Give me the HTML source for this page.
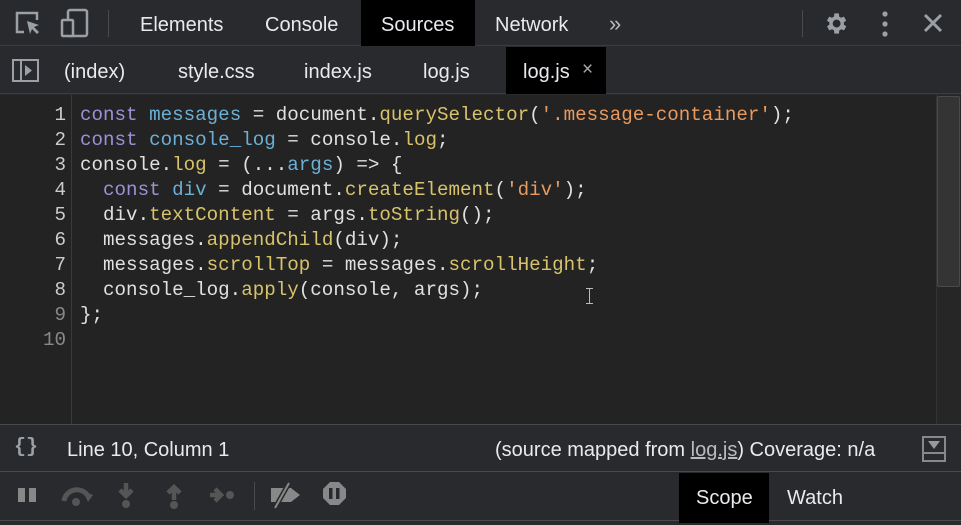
<!DOCTYPE html>
<html><head><style>
*{margin:0;padding:0;box-sizing:border-box}
body{width:961px;height:525px;background:#292a2d;font-family:"Liberation Sans",sans-serif;color:#e8eaed;position:relative;overflow:hidden}
.abs{position:absolute}
.t{position:absolute;font-size:20px;top:14px;color:#e8eaed}
.f{position:absolute;font-size:20px;top:61px;color:#e8eaed}
.code{position:absolute;left:80px;top:103px;font-family:"Liberation Mono",monospace;font-size:19.2px;line-height:25px;color:#e0e0e0;white-space:pre}
.ln{position:absolute;left:0;width:66px;top:103px;font-family:"Liberation Mono",monospace;font-size:19.2px;line-height:25px;color:#ccc;text-align:right;white-space:pre}
.k{color:#9f8fd8}.v{color:#6bb0d6}.m{color:#d8c26a}.s{color:#e89a5f}
</style></head><body>
<div class="abs" style="left:0;top:0;width:961px;height:46px;background:#292a2d;border-bottom:1px solid #3c3d40"></div>
<svg class="abs" style="left:14px;top:10px" width="30" height="28" viewBox="0 0 30 28"><path d="M10 22H3V3h20v7" fill="none" stroke="#9aa0a6" stroke-width="2.5"/><path d="M13 11l12 4-5 2 5 5-2 2-5-5-2 5z" fill="#9aa0a6"/></svg>
<svg class="abs" style="left:60px;top:8px" width="30" height="30" viewBox="0 0 30 30"><rect x="8" y="2" width="19" height="26" rx="2" fill="none" stroke="#9aa0a6" stroke-width="2.5"/><rect x="2" y="12" width="11" height="16" rx="1" fill="#292a2d" stroke="#9aa0a6" stroke-width="2.5"/></svg>
<div class="abs" style="left:108px;top:10px;width:1px;height:27px;background:#4a4b4e"></div>
<div class="t" style="left:140px">Elements</div>
<div class="t" style="left:265px">Console</div>
<div class="abs" style="left:361px;top:0;width:114px;height:46px;background:#000"></div>
<div class="t" style="left:381px">Sources</div>
<div class="t" style="left:495px">Network</div>
<div class="t" style="left:609px;color:#bbb;font-size:22px;top:11px">»</div>
<div class="abs" style="left:802px;top:10px;width:1px;height:27px;background:#4a4b4e"></div>
<svg class="abs" style="left:822px;top:10px" width="27" height="27" viewBox="0 0 24 24"><path fill="#9aa0a6" d="M19.4 13a7.5 7.5 0 0 0 0-2l2.1-1.6-2-3.5-2.5 1a7 7 0 0 0-1.7-1L15 3h-4l-.4 2.9a7 7 0 0 0-1.7 1l-2.5-1-2 3.5L6.6 11a7.5 7.5 0 0 0 0 2l-2.1 1.6 2 3.5 2.5-1a7 7 0 0 0 1.7 1L11 21h4l.4-2.9a7 7 0 0 0 1.7-1l2.5 1 2-3.5zM13 15.5a3.5 3.5 0 1 1 0-7 3.5 3.5 0 0 1 0 7z"/></svg>
<svg class="abs" style="left:878px;top:10px" width="14" height="28"><circle cx="7" cy="4" r="2.6" fill="#9aa0a6"/><circle cx="7" cy="14" r="2.6" fill="#9aa0a6"/><circle cx="7" cy="24" r="2.6" fill="#9aa0a6"/></svg>
<svg class="abs" style="left:923px;top:13px" width="20" height="20"><path d="M2 2L18 18M18 2L2 18" stroke="#9aa0a6" stroke-width="3"/></svg>
<div class="abs" style="left:0;top:47px;width:961px;height:47px;background:#292a2d;border-bottom:1px solid #3c3d40"></div>
<svg class="abs" style="left:12px;top:59px" width="28" height="24"><rect x="1" y="1" width="25" height="21" fill="none" stroke="#9aa0a6" stroke-width="2"/><line x1="9" y1="1" x2="9" y2="22" stroke="#9aa0a6" stroke-width="2"/><path d="M13 6v11l7-5.5z" fill="#9aa0a6"/></svg>
<div class="f" style="left:64px">(index)</div>
<div class="f" style="left:178px">style.css</div>
<div class="f" style="left:304px">index.js</div>
<div class="f" style="left:423px">log.js</div>
<div class="abs" style="left:506px;top:47px;width:100px;height:47px;background:#000"></div>
<div class="f" style="left:523px">log.js</div>
<div class="f" style="left:582px;top:59px;color:#aaa;font-size:19px">×</div>
<div class="abs" style="left:0;top:95px;width:961px;height:329px;background:#232323"></div>
<div class="abs" style="left:71px;top:95px;width:1px;height:329px;background:#3a3a3a"></div>
<div class="ln">1
2
3
4
5
6
7
8
<span style="color:#888">9
10</span></div>
<div class="code"><span class="k">const</span> <span class="v">messages</span> = document.<span class="m">querySelector</span>(<span class="s">'.message-container'</span>);
<span class="k">const</span> <span class="v">console_log</span> = console.<span class="m">log</span>;
console.<span class="m">log</span> = (...<span class="v">args</span>) => {
  <span class="k">const</span> <span class="v">div</span> = document.<span class="m">createElement</span>(<span class="s">'div'</span>);
  div.<span class="m">textContent</span> = args.<span class="m">toString</span>();
  messages.<span class="m">appendChild</span>(div);
  messages.<span class="m">scrollTop</span> = messages.<span class="m">scrollHeight</span>;
  console_log.<span class="m">apply</span>(console, args);
};</div>
<div class="abs" style="left:589px;top:288px;width:1px;height:16px;background:#bbb"></div>
<div class="abs" style="left:586px;top:288px;width:7px;height:1px;background:#bbb"></div>
<div class="abs" style="left:586px;top:303px;width:7px;height:1px;background:#bbb"></div>
<div class="abs" style="left:936px;top:95px;width:25px;height:329px;background:#262626;border-left:1px solid #333"></div>
<div class="abs" style="left:937px;top:96px;width:23px;height:191px;background:#343434;border:1px solid #4a4a4a;border-radius:2px"></div>
<div class="abs" style="left:0;top:424px;width:961px;height:48px;background:#292a2d;border-top:1px solid #4a4b4e;border-bottom:1px solid #4a4b4e"></div>
<div class="abs" style="left:14px;top:436px;font-family:'Liberation Mono',monospace;font-size:20px;font-weight:bold;color:#9aa0a6">{}</div>
<div class="abs" style="left:67px;top:439px;font-size:20px">Line 10, Column 1</div>
<div class="abs" style="left:495px;top:439px;font-size:20px">(source mapped from <span style="text-decoration:underline;color:#bbb">log.js</span>) Coverage: n/a</div>
<svg class="abs" style="left:922px;top:436px" width="24" height="26"><rect x="1" y="1" width="22" height="24" fill="none" stroke="#888" stroke-width="2"/><line x1="1" y1="17" x2="23" y2="17" stroke="#888" stroke-width="2"/><path d="M6 5h12l-6 8z" fill="#999"/></svg>
<div class="abs" style="left:0;top:473px;width:961px;height:48px;background:#292a2d;border-bottom:1px solid #4a4b4e"></div>
<svg class="abs" style="left:14px;top:482px" width="340" height="30">
<rect x="4" y="6" width="7" height="14" fill="#888"/><rect x="15" y="6" width="7" height="14" fill="#888"/>
<path d="M50 19a13 13 0 0 1 24-5" fill="none" stroke="#555" stroke-width="5"/><path d="M69 9l10 4-5 7z" fill="#555"/><circle cx="62" cy="20" r="4" fill="#555"/>
<path d="M112 1v12M106 8l6 6 6-6" stroke="#555" stroke-width="4.5" fill="none"/><circle cx="112" cy="22" r="4" fill="#555"/>
<path d="M160 18V5M154 11l6-6 6 6" stroke="#555" stroke-width="4.5" fill="none"/><circle cx="160" cy="23" r="4" fill="#555"/>
<path d="M196 13h10M201 7l6 6-6 6" stroke="#555" stroke-width="4.5" fill="none"/><circle cx="216" cy="13" r="4" fill="#555"/>
<rect x="240" y="0" width="1" height="28" fill="#4a4b4e"/>
<path d="M257 6h20l9 7-9 7h-20z" fill="#888"/><path d="M261 26l14-25" stroke="#292a2d" stroke-width="5"/><path d="M261 26l14-25" stroke="#888" stroke-width="2"/>
<path d="M316 0h9l7 7v9l-7 7h-9l-7-7V7z" fill="#888"/><rect x="315" y="6" width="3.5" height="11" fill="#292a2d"/><rect x="322" y="6" width="3.5" height="11" fill="#292a2d"/>
</svg>
<div class="abs" style="left:679px;top:473px;width:90px;height:50px;background:#000"></div>
<div class="abs" style="left:696px;top:487px;font-size:20px">Scope</div>
<div class="abs" style="left:787px;top:487px;font-size:20px">Watch</div>
</body></html>
